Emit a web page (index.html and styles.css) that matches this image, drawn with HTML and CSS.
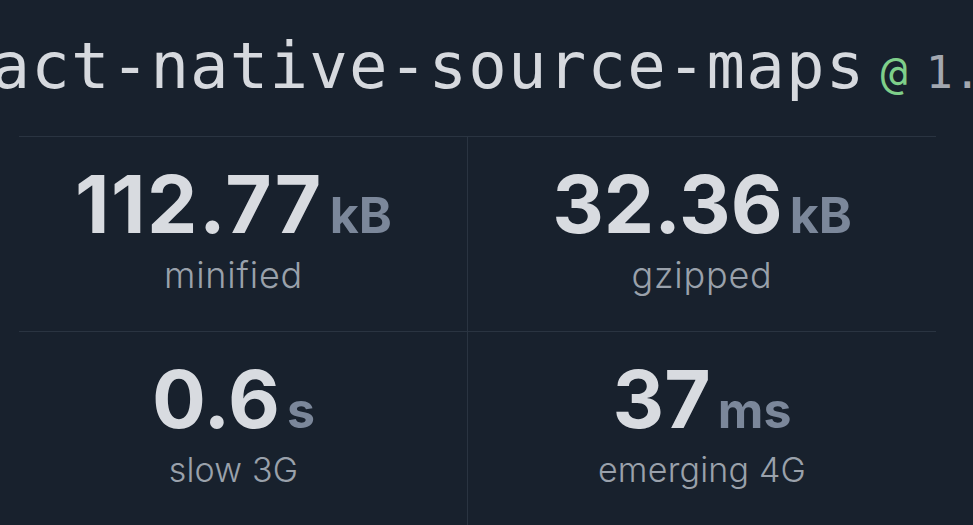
FILE: index.html
```html
<!DOCTYPE html>
<html lang="en">
<head>
<meta charset="utf-8">
<title>react-native-source-maps</title>
<link rel="stylesheet" href="styles.css">
</head>
<body>
  <div class="title"><span class="name">react-native-source-maps</span><span class="at">@</span><span class="ver">1.0.0</span></div>
  <div class="stats">
    <div class="rule"></div>
    <div class="cell left">
      <div class="value"><span class="num wide">112.77</span><span class="unit">kB</span></div>
      <div class="label">minified</div>
    </div>
    <div class="cell">
      <div class="value"><span class="num">32.36</span><span class="unit">kB</span></div>
      <div class="label">gzipped</div>
    </div>
    <div class="rule"></div>
    <div class="cell left row2">
      <div class="value"><span class="num">0.6</span><span class="unit">s</span></div>
      <div class="label">slow 3G</div>
    </div>
    <div class="cell row2">
      <div class="value"><span class="num">37</span><span class="unit">ms</span></div>
      <div class="label">emerging 4G</div>
    </div>
  </div>
</body>
</html>
```

FILE: styles.css
```css
html, body {
  margin: 0;
  padding: 0;
  background: #18212d;
  overflow: hidden;
  height: 100%;
}
body {
  font-family: Inter, "Noto Sans", sans-serif;
}
.title {
  white-space: nowrap;
  margin-left: -88px;
  height: 136px;
  padding-top: 26px;
  box-sizing: border-box;
  font-family: "DejaVu Sans Mono", "Liberation Mono", monospace;
  font-size: 64px;
  line-height: 80px;
}
.name {
  letter-spacing: 1.2px;
  color: #d6d9de;
}
.at {
  font-size: 45px;
  color: #7fcf8a;
  margin-left: 15px;
  margin-right: 18px;
}
.ver {
  font-size: 45px;
  letter-spacing: 1px;
  color: #a3a8b0;
}
.stats {
  display: grid;
  grid-template-columns: 468px 468px;
}
.rule {
  grid-column: 1 / 3;
  height: 1px;
  background: #2a3441;
  margin-left: 19px;
}
.cell {
  height: 194px;
  display: flex;
  flex-direction: column;
  align-items: center;
  padding-top: 27px;
  box-sizing: border-box;
}
.left {
  border-right: 1px solid #2a3441;
}
.value {
  line-height: 80px;
  white-space: nowrap;
}
.num {
  font-size: 80px;
  font-weight: 700;
  color: #d8dbe0;
}
.num.wide {
  letter-spacing: 1.5px;
}
.unit {
  font-size: 50px;
  font-weight: 700;
  color: #7b879a;
  margin-left: 7px;
}
.label {
  font-size: 36px;
  font-weight: 300;
  line-height: 40px;
  color: #9aa1ab;
  margin-top: -12px;
  letter-spacing: 0.8px;
}
.row2 .label {
  font-size: 34px;
  letter-spacing: 0.2px;
}
```
